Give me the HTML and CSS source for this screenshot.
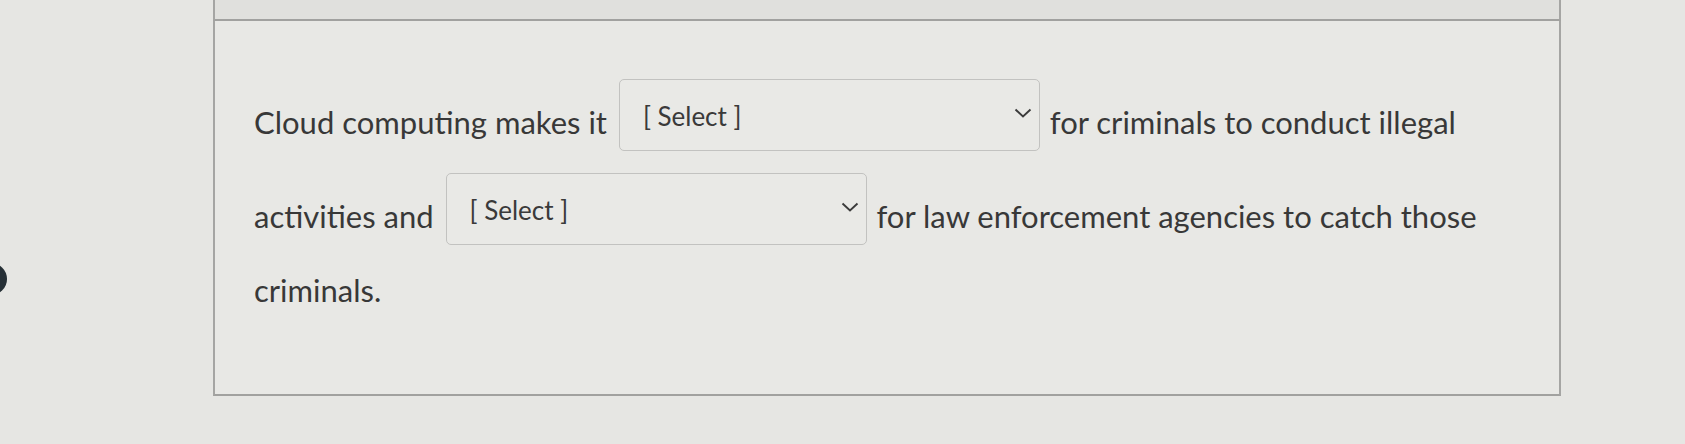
FILE: index.html
```html
<!DOCTYPE html>
<html lang="en">
<head>
<meta charset="utf-8">
<title>Question</title>
<link rel="stylesheet" href="styles.css">
</head>
<body>
<div class="edge-dot"></div>
<div class="page">
  <div class="prev-box"></div>
  <div class="card">
    <p class="question">Cloud computing makes it <span class="select"><span class="select-label">[ Select ]</span><svg class="chev" viewBox="0 0 18 10" width="18" height="10"><path d="M1.5 1.5 L9 8.5 L16.5 1.5" fill="none" stroke="#3b3b3b" stroke-width="1.9"/></svg></span> for criminals to conduct illegal activities and <span class="select"><span class="select-label">[ Select ]</span><svg class="chev" viewBox="0 0 18 10" width="18" height="10"><path d="M1.5 1.5 L9 8.5 L16.5 1.5" fill="none" stroke="#3b3b3b" stroke-width="1.9"/></svg></span> for law enforcement agencies to catch those criminals.</p>
  </div>
</div>
</body>
</html>
```

FILE: styles.css
```css
html, body {
  margin: 0;
  padding: 0;
}
body {
  background: #e6e6e3;
  width: 1685px;
  height: 444px;
  overflow: hidden;
  position: relative;
  font-family: Lato, "Open Sans", sans-serif;
  color: #383838;
}
.edge-dot {
  position: absolute;
  left: -25px;
  top: 263px;
  width: 32px;
  height: 32px;
  border-radius: 50%;
  background: #263036;
}
.page {
  margin-left: 213px;
  width: 1348px;
}
.prev-box {
  height: 19px;
  background: #e0e0dd;
  border-left: 2px solid #a5a5a3;
  border-right: 2px solid #a5a5a3;
  border-bottom: 2px solid #a1a19f;
}
.card {
  height: 375px;
  box-sizing: border-box;
  background: #e8e8e5;
  border-left: 2px solid #a5a5a3;
  border-right: 2px solid #a5a5a3;
  border-bottom: 2px solid #a1a19f;
  padding: 51px 40px 0 39px;
}
.question {
  margin: 0;
  font-size: 31px;
  line-height: 60px;
}
.select {
  display: inline-flex;
  align-items: center;
  justify-content: space-between;
  box-sizing: border-box;
  width: 421px;
  height: 72px;
  margin: 7px 2px 15px 4px;
  padding: 2px 7px 0 23px;
  border: 1px solid #c2c2c0;
  border-radius: 5px;
  background: #e9e9e6;
  font-size: 26px;
  line-height: 1;
  color: #3a3a3a;
  vertical-align: 8px;
}
.chev {
  display: block;
  margin-bottom: 6px;
}
```
